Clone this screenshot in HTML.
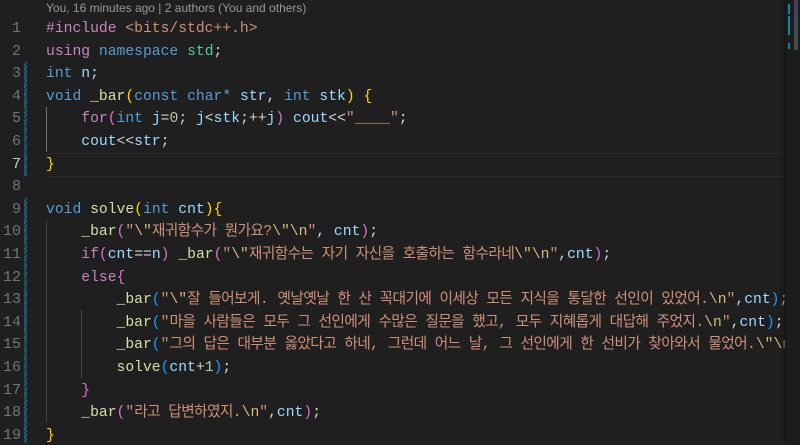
<!DOCTYPE html>
<html><head><meta charset="utf-8"><style>
html,body{margin:0;padding:0;background:#1f1f1f;width:800px;height:445px;overflow:hidden}
body{position:relative;font-family:"Liberation Mono","Noto Sans CJK KR",monospace;font-size:14.7px;color:#d4d4d4}
.lens{position:absolute;left:46px;top:1px;font-family:"Liberation Sans",sans-serif;font-size:12px;color:#999;}
.ln{position:absolute;left:0;width:21px;text-align:right;color:#6e7681;height:22.6px;line-height:22.6px;font-size:15px}
.ln.cur{color:#cccccc}
.code{position:absolute;left:46px;white-space:pre;height:22.6px;line-height:22.6px}
.k{letter-spacing:-0.6px}
.pk{color:#c586c0}.bl{color:#569cd6}.tl{color:#4ec9b0}.lb{color:#9cdcfe}.fn{color:#dcdcaa}.st{color:#ce9178}.es{color:#d7ba7d}.nu{color:#b5cea8}
.y{color:#ffd700}.p{color:#da70d6}.b{color:#179fff}
.g{position:absolute;left:24px;width:3px;background:repeating-linear-gradient(135deg,#1b81a8 0 1px,#1f1f1f 1px 2px)}
.ig{position:absolute;width:1px;background:#404040}
.wrap{position:absolute;left:0;top:1px;width:786px;height:444px;overflow:hidden}
</style></head><body>
<div class="lens">You, 16 minutes ago | 2 authors (You and others)</div>
<div style="position:absolute;left:46px;top:153px;width:740px;height:22px;border-top:1px solid #2a2a2a;border-bottom:1px solid #2a2a2a"></div>
<div class="g" style="top:62px;height:114px"></div>
<div class="g" style="top:198px;height:245px"></div>
<div class="ig" style="left:46px;top:107px;height:45px;background:#707070"></div>
<div class="ig" style="left:46px;top:220px;height:203px"></div>
<div class="ig" style="left:81px;top:310px;height:68px"></div>
<div class="wrap">
<div class="ln" style="top:17px">1</div>
<div class="ln" style="top:39.6px">2</div>
<div class="ln" style="top:62.2px">3</div>
<div class="ln" style="top:84.8px">4</div>
<div class="ln" style="top:107.4px">5</div>
<div class="ln" style="top:130px">6</div>
<div class="ln cur" style="top:152.6px">7</div>
<div class="ln" style="top:175.2px">8</div>
<div class="ln" style="top:197.8px">9</div>
<div class="ln" style="top:220.4px">10</div>
<div class="ln" style="top:243px">11</div>
<div class="ln" style="top:265.6px">12</div>
<div class="ln" style="top:288.2px">13</div>
<div class="ln" style="top:310.8px">14</div>
<div class="ln" style="top:333.4px">15</div>
<div class="ln" style="top:356px">16</div>
<div class="ln" style="top:378.6px">17</div>
<div class="ln" style="top:401.2px">18</div>
<div class="ln" style="top:423.8px">19</div>

<div class="code" style="top:17px"><span class="pk">#include</span> <span class="st">&lt;bits/stdc++.h&gt;</span></div>
<div class="code" style="top:39.6px"><span class="pk">using</span> <span class="bl">namespace</span> <span class="tl">std</span>;</div>
<div class="code" style="top:62.2px"><span class="bl">int</span> <span class="lb">n</span>;</div>
<div class="code" style="top:84.8px"><span class="bl">void</span> <span class="fn">_bar</span><span class="y">(</span><span class="bl">const</span> <span class="bl">char</span><span class="bl">*</span> <span class="lb">str</span>, <span class="bl">int</span> <span class="lb">stk</span><span class="y">)</span> <span class="y">{</span></div>
<div class="code" style="top:107.4px">    <span class="pk">for</span><span class="p">(</span><span class="bl">int</span> <span class="lb">j</span>=<span class="nu">0</span>; <span class="lb">j</span>&lt;<span class="lb">stk</span>;++<span class="lb">j</span><span class="p">)</span> <span class="lb">cout</span>&lt;&lt;<span class="st">"____"</span>;</div>
<div class="code" style="top:130px">    <span class="lb">cout</span>&lt;&lt;<span class="lb">str</span>;</div>
<div class="code" style="top:152.6px"><span class="y">}</span></div>
<div class="code" style="top:197.8px"><span class="bl">void</span> <span class="fn">solve</span><span class="y">(</span><span class="bl">int</span> <span class="lb">cnt</span><span class="y">){</span></div>
<div class="code" style="top:220.4px">    <span class="fn">_bar</span><span class="p">(</span><span class="st">"<span class="es">\"</span><span class="k">재귀함수가 뭔가요</span>?<span class="es">\"\n</span>"</span>, <span class="lb">cnt</span><span class="p">)</span>;</div>
<div class="code" style="top:243px">    <span class="pk">if</span><span class="p">(</span><span class="lb">cnt</span>==<span class="lb">n</span><span class="p">)</span> <span class="fn">_bar</span><span class="p">(</span><span class="st">"<span class="es">\"</span><span class="k">재귀함수는 자기 자신을 호출하는 함수라네</span><span class="es">\"\n</span>"</span>,<span class="lb">cnt</span><span class="p">)</span>;</div>
<div class="code" style="top:265.6px">    <span class="pk">else</span><span class="p">{</span></div>
<div class="code" style="top:288.2px">        <span class="fn">_bar</span><span class="b">(</span><span class="st">"<span class="es">\"</span><span class="k">잘 들어보게</span>. <span class="k">옛날옛날 한 산 꼭대기에 이세상 모든 지식을 통달한 선인이 있었어</span>.<span class="es">\n</span>"</span>,<span class="lb">cnt</span><span class="b">)</span>;</div>
<div class="code" style="top:310.8px">        <span class="fn">_bar</span><span class="b">(</span><span class="st">"<span class="k">마을 사람들은 모두 그 선인에게 수많은 질문을 했고</span>, <span class="k">모두 지혜롭게 대답해 주었지</span>.<span class="es">\n</span>"</span>,<span class="lb">cnt</span><span class="b">)</span>;</div>
<div class="code" style="top:333.4px">        <span class="fn">_bar</span><span class="b">(</span><span class="st">"<span class="k">그의 답은 대부분 옳았다고 하네</span>, <span class="k">그런데 어느 날</span>, <span class="k">그 선인에게 한 선비가 찾아와서 물었어</span>.<span class="es">\"\n</span>"</span>,<span class="lb">cnt</span><span class="b">)</span>;</div>
<div class="code" style="top:356px">        <span class="fn">solve</span><span class="b">(</span><span class="lb">cnt</span>+<span class="nu">1</span><span class="b">)</span>;</div>
<div class="code" style="top:378.6px">    <span class="p">}</span></div>
<div class="code" style="top:401.2px">    <span class="fn">_bar</span><span class="p">(</span><span class="st">"<span class="k">라고 답변하였지</span>.<span class="es">\n</span>"</span>,<span class="lb">cnt</span><span class="p">)</span>;</div>
<div class="code" style="top:423.8px"><span class="y">}</span></div>
</div>
<div style="position:absolute;left:786px;top:0;width:14px;height:445px;background:#1c1c1c;box-shadow:-2px 0 3px #161616"></div>
<div style="position:absolute;left:788px;top:4px;width:2px;height:10px;background:#1b81a8"></div>
<div style="position:absolute;left:788px;top:16px;width:2px;height:19px;background:#1b81a8"></div>
<div style="position:absolute;left:788px;top:43px;width:2px;height:6px;background:#1b81a8"></div>
<div style="position:absolute;left:794px;top:0;width:4px;height:50px;background:linear-gradient(#4a3c56,#3b4a5a,#4a5040)"></div>
</body></html>
